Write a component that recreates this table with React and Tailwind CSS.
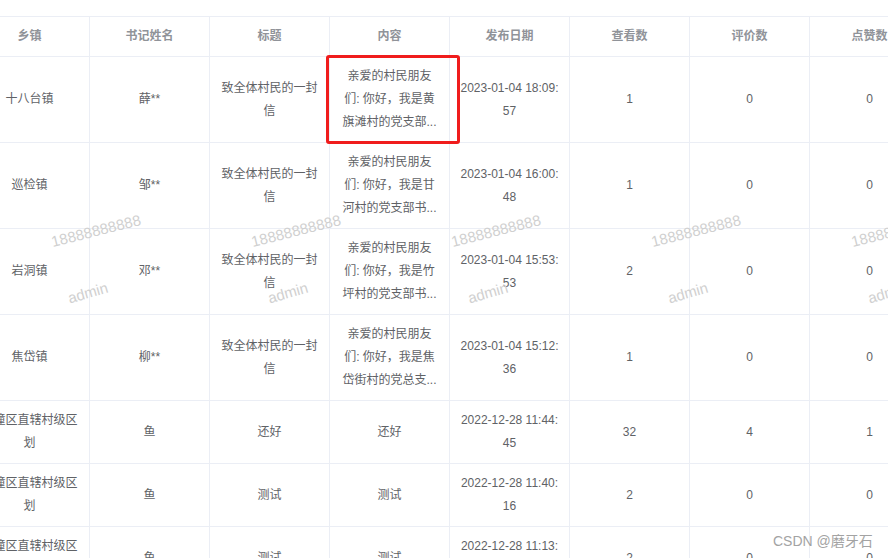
import React from "react";

const headers = ["乡镇", "书记姓名", "标题", "内容", "发布日期", "查看数", "评价数", "点赞数"];

const rows = [
  {
    h: "h-[86px]",
    c: [
      ["十八台镇"],
      ["薛**"],
      ["致全体村民的一封", "信"],
      ["亲爱的村民朋友", "们: 你好，我是黄", "旗滩村的党支部..."],
      ["2023-01-04 18:09:", "57"],
      ["1"],
      ["0"],
      ["0"],
    ],
  },
  {
    h: "h-[86px]",
    c: [
      ["巡检镇"],
      ["邹**"],
      ["致全体村民的一封", "信"],
      ["亲爱的村民朋友", "们: 你好，我是甘", "河村的党支部书..."],
      ["2023-01-04 16:00:", "48"],
      ["1"],
      ["0"],
      ["0"],
    ],
  },
  {
    h: "h-[86px]",
    c: [
      ["岩洞镇"],
      ["邓**"],
      ["致全体村民的一封", "信"],
      ["亲爱的村民朋友", "们: 你好，我是竹", "坪村的党支部书..."],
      ["2023-01-04 15:53:", "53"],
      ["2"],
      ["0"],
      ["0"],
    ],
  },
  {
    h: "h-[86px]",
    c: [
      ["焦岱镇"],
      ["柳**"],
      ["致全体村民的一封", "信"],
      ["亲爱的村民朋友", "们: 你好，我是焦", "岱街村的党总支..."],
      ["2023-01-04 15:12:", "36"],
      ["1"],
      ["0"],
      ["0"],
    ],
  },
  {
    h: "h-[63px]",
    c: [
      ["临潼区直辖村级区", "划"],
      ["鱼"],
      ["还好"],
      ["还好"],
      ["2022-12-28 11:44:", "45"],
      ["32"],
      ["4"],
      ["1"],
    ],
  },
  {
    h: "h-[63px]",
    c: [
      ["临潼区直辖村级区", "划"],
      ["鱼"],
      ["测试"],
      ["测试"],
      ["2022-12-28 11:40:", "16"],
      ["2"],
      ["0"],
      ["0"],
    ],
  },
  {
    h: "h-[63px]",
    c: [
      ["临潼区直辖村级区", "划"],
      ["鱼"],
      ["测试"],
      ["测试"],
      ["2022-12-28 11:13:", "05"],
      ["2"],
      ["0"],
      ["0"],
    ],
  },
];

const marks = [
  "left-[96px] top-[231px]",
  "left-[296px] top-[231px]",
  "left-[496px] top-[231px]",
  "left-[696px] top-[231px]",
  "left-[896px] top-[231px]",
];
const admins = [
  "left-[88px] top-[293px]",
  "left-[288px] top-[293px]",
  "left-[488px] top-[293px]",
  "left-[688px] top-[293px]",
  "left-[888px] top-[293px]",
];

export default function App() {
  return (
    <div className="relative w-[888px] h-[558px] overflow-hidden bg-white font-['Liberation_Sans','Noto_Sans_CJK_SC',sans-serif] text-[12px] leading-[23px]">
      <div className="ml-[-30px] mt-[16px] w-[960px] border-t border-[#ebeef5]">
        <div className="grid grid-cols-[repeat(8,120px)] h-[40px]">
          {headers.map((t) => (
            <div
              key={t}
              className="flex items-center justify-center border-r border-b border-[#ebeef5] px-[10px] py-2 font-bold text-[#909399]"
            >
              {t}
            </div>
          ))}
        </div>
        {rows.map((r, i) => (
          <div key={i} className={`grid grid-cols-[repeat(8,120px)] ${r.h}`}>
            {r.c.map((lines, j) => (
              <div
                key={j}
                className="flex flex-col items-center justify-center border-r border-b border-[#ebeef5] px-[10px] py-2 text-center text-[#606266] whitespace-nowrap overflow-hidden"
              >
                {lines.map((l, k) => (
                  <div key={k}>{l}</div>
                ))}
              </div>
            ))}
          </div>
        ))}
      </div>

      {marks.map((c) => (
        <div
          key={c}
          className={`pointer-events-none absolute ${c} -translate-x-1/2 -translate-y-1/2 -rotate-[14deg] text-[15px] leading-[18px] text-[#d0d0d0] font-['Liberation_Sans',sans-serif] whitespace-nowrap`}
        >
          18888888888
        </div>
      ))}
      {admins.map((c) => (
        <div
          key={c}
          className={`pointer-events-none absolute ${c} -translate-x-1/2 -translate-y-1/2 -rotate-[16deg] text-[15px] leading-[18px] text-[#d0d0d0] font-['Liberation_Sans',sans-serif] whitespace-nowrap`}
        >
          admin
        </div>
      ))}

      <div className="pointer-events-none absolute left-[326px] top-[55px] w-[134px] h-[89px] rounded-[3px] border-[3px] border-[#f01c1c]" />

      <div className="pointer-events-none absolute left-[773px] top-[531px] text-[14px] leading-[20px] text-[#a3a3a3] whitespace-nowrap">
        CSDN @磨牙石
      </div>
    </div>
  );
}
